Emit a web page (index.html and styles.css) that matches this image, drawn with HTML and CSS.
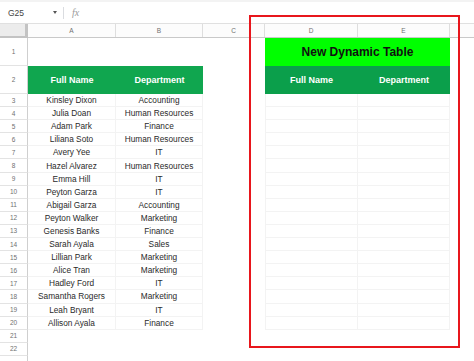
FILE: index.html
```html
<!DOCTYPE html>
<html>
<head>
<meta charset="utf-8">
<link rel="stylesheet" href="styles.css">
</head>
<body>
<div class="sheet">
  <div class="fbar">
    <div class="name">G25</div>
    <div class="caret"></div>
    <div class="sep"></div>
    <div class="fx">fx</div>
  </div>

  <div class="row colhdr">
    <div class="corner"></div>
    <div class="ch">A</div><div class="ch">B</div><div class="ch">C</div><div class="ch">D</div><div class="ch">E</div><div class="ch last"></div>
  </div>

  <div class="row tall">
    <div class="rh">1</div>
    <div class="c"></div><div class="c"></div><div class="c"></div>
    <div class="title">New Dynamic Table</div>
    <div class="c"></div>
  </div>

  <div class="row tall">
    <div class="rh">2</div>
    <div class="hd">Full Name</div><div class="hd">Department</div><div class="c"></div>
    <div class="hd2">Full Name</div><div class="hd2">Department</div>
    <div class="c"></div>
  </div>

  <div class="row"><div class="rh">3</div><div class="d a">Kinsley Dixon</div><div class="d b">Accounting</div><div class="c"></div><div class="e dd"></div><div class="e ee"></div><div class="c"></div></div>
  <div class="row"><div class="rh">4</div><div class="d a">Julia Doan</div><div class="d b">Human Resources</div><div class="c"></div><div class="e dd"></div><div class="e ee"></div><div class="c"></div></div>
  <div class="row"><div class="rh">5</div><div class="d a">Adam Park</div><div class="d b">Finance</div><div class="c"></div><div class="e dd"></div><div class="e ee"></div><div class="c"></div></div>
  <div class="row"><div class="rh">6</div><div class="d a">Liliana Soto</div><div class="d b">Human Resources</div><div class="c"></div><div class="e dd"></div><div class="e ee"></div><div class="c"></div></div>
  <div class="row"><div class="rh">7</div><div class="d a">Avery Yee</div><div class="d b">IT</div><div class="c"></div><div class="e dd"></div><div class="e ee"></div><div class="c"></div></div>
  <div class="row"><div class="rh">8</div><div class="d a">Hazel Alvarez</div><div class="d b">Human Resources</div><div class="c"></div><div class="e dd"></div><div class="e ee"></div><div class="c"></div></div>
  <div class="row"><div class="rh">9</div><div class="d a">Emma Hill</div><div class="d b">IT</div><div class="c"></div><div class="e dd"></div><div class="e ee"></div><div class="c"></div></div>
  <div class="row"><div class="rh">10</div><div class="d a">Peyton Garza</div><div class="d b">IT</div><div class="c"></div><div class="e dd"></div><div class="e ee"></div><div class="c"></div></div>
  <div class="row"><div class="rh">11</div><div class="d a">Abigail Garza</div><div class="d b">Accounting</div><div class="c"></div><div class="e dd"></div><div class="e ee"></div><div class="c"></div></div>
  <div class="row"><div class="rh">12</div><div class="d a">Peyton Walker</div><div class="d b">Marketing</div><div class="c"></div><div class="e dd"></div><div class="e ee"></div><div class="c"></div></div>
  <div class="row"><div class="rh">13</div><div class="d a">Genesis Banks</div><div class="d b">Finance</div><div class="c"></div><div class="e dd"></div><div class="e ee"></div><div class="c"></div></div>
  <div class="row"><div class="rh">14</div><div class="d a">Sarah Ayala</div><div class="d b">Sales</div><div class="c"></div><div class="e dd"></div><div class="e ee"></div><div class="c"></div></div>
  <div class="row"><div class="rh">15</div><div class="d a">Lillian Park</div><div class="d b">Marketing</div><div class="c"></div><div class="e dd"></div><div class="e ee"></div><div class="c"></div></div>
  <div class="row"><div class="rh">16</div><div class="d a">Alice Tran</div><div class="d b">Marketing</div><div class="c"></div><div class="e dd"></div><div class="e ee"></div><div class="c"></div></div>
  <div class="row"><div class="rh">17</div><div class="d a">Hadley Ford</div><div class="d b">IT</div><div class="c"></div><div class="e dd"></div><div class="e ee"></div><div class="c"></div></div>
  <div class="row"><div class="rh">18</div><div class="d a">Samantha Rogers</div><div class="d b">Marketing</div><div class="c"></div><div class="e dd"></div><div class="e ee"></div><div class="c"></div></div>
  <div class="row"><div class="rh">19</div><div class="d a">Leah Bryant</div><div class="d b">IT</div><div class="c"></div><div class="e dd"></div><div class="e ee"></div><div class="c"></div></div>
  <div class="row"><div class="rh">20</div><div class="d a">Allison Ayala</div><div class="d b">Finance</div><div class="c"></div><div class="e dd"></div><div class="e ee"></div><div class="c"></div></div>
  <div class="row"><div class="rh">21</div></div>
  <div class="row"><div class="rh">22</div></div>
  <div class="row"><div class="rh"></div></div>

  <div class="highlight"></div>
</div>
</body>
</html>
```

FILE: styles.css
```css
html, body {
  margin: 0;
  padding: 0;
  background: #ffffff;
}
body {
  font-family: "Liberation Sans", Arial, sans-serif;
  width: 474px;
  height: 361px;
  overflow: hidden;
}
.sheet {
  position: relative;
  width: 474px;
  height: 361px;
  overflow: hidden;
}
.fbar {
  box-sizing: border-box;
  height: 24px;
  border-top: 2px solid #f3f3f3;
  border-bottom: 1px solid #e0e0e0;
  display: flex;
  align-items: center;
}
.name {
  box-sizing: border-box;
  width: 53px;
  padding-left: 8px;
  font-size: 8.5px;
  color: #444;
}
.caret {
  width: 0;
  height: 0;
  border-left: 2.5px solid transparent;
  border-right: 2.5px solid transparent;
  border-top: 3px solid #555;
}
.sep {
  width: 1px;
  height: 12px;
  background: #dadce0;
  margin: 0 8px 0 6px;
}
.fx {
  font-family: "Liberation Serif", serif;
  font-style: italic;
  font-size: 10px;
  color: #9a9a9a;
}
.row {
  display: grid;
  grid-template-columns: 28px 88px 87px 62px 93px 92px 1fr;
  height: 13.1px;
  box-sizing: border-box;
}
.row.tall {
  height: 28px;
}
.row.colhdr {
  height: 14px;
  background: #fcfcfc;
  border-bottom: 1px solid #c9c9c9;
}
.corner {
  box-sizing: border-box;
  background: #ececec;
  border-right: 3px solid #c3c3c3;
  border-bottom: 2px solid #c3c3c3;
  margin-bottom: -1px;
}
.ch {
  box-sizing: border-box;
  border-right: 1px solid #dedede;
  font-size: 6.5px;
  color: #707070;
  display: flex;
  align-items: center;
  justify-content: center;
}
.ch.last {
  border-right: none;
}
.rh {
  box-sizing: border-box;
  border-right: 1px solid #cfcfcf;
  border-bottom: 1px solid #e3e3e3;
  font-size: 6.5px;
  color: #707070;
  display: flex;
  align-items: center;
  justify-content: center;
  background: #fff;
}
.c {
  background: #fff;
}
.title {
  grid-column: span 2;
  background: #00ff00;
  color: #111;
  font-weight: bold;
  font-size: 12px;
  display: flex;
  align-items: center;
  justify-content: center;
}
.hd, .hd2 {
  color: #fff;
  font-weight: bold;
  font-size: 9px;
  display: flex;
  align-items: center;
  justify-content: center;
}
.hd {
  background: #10a64f;
}
.hd2 {
  background: #0b9f4b;
}
.d, .e {
  box-sizing: border-box;
  border-bottom: 1px solid #f3f3f3;
  border-right: 1px solid #f3f3f3;
  font-size: 8.3px;
  color: #2a2a2a;
  display: flex;
  align-items: center;
  justify-content: center;
  white-space: nowrap;
}
.dd {
  border-left: 1px solid #f3f3f3;
}
.highlight {
  position: absolute;
  box-sizing: border-box;
  left: 249px;
  top: 15px;
  width: 211px;
  height: 333px;
  border: 2px solid #e8161c;
  pointer-events: none;
}
```
